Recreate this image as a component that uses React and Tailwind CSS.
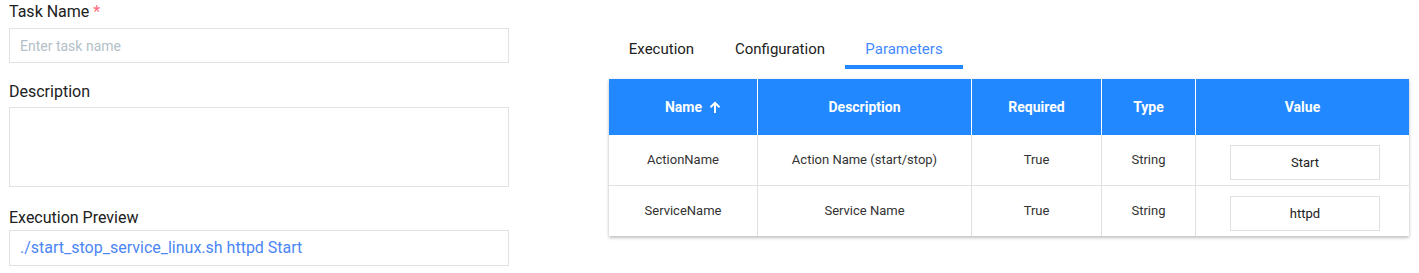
import React, { useState } from "react";

const columns = [
  { key: "name", label: "Name", width: "w-[148px]", sortable: true },
  { key: "description", label: "Description", width: "w-[214px]" },
  { key: "required", label: "Required", width: "w-[130px]" },
  { key: "type", label: "Type", width: "w-[94px]" },
  { key: "value", label: "Value", width: "w-[214px]" },
];

const initialParams = [
  { id: 1, name: "ActionName", description: "Action Name (start/stop)", required: "True", type: "String", value: "Start" },
  { id: 2, name: "ServiceName", description: "Service Name", required: "True", type: "String", value: "httpd" },
];

function SortArrow() {
  return (
    <svg width="12" height="13" viewBox="0 0 12 13" className="ml-[7px]">
      <path d="M6 12V2M1.5 6.3L6 1.8l4.5 4.5" fill="none" stroke="white" strokeWidth="2" />
    </svg>
  );
}

function App() {
  const [taskName, setTaskName] = useState("");
  const [description, setDescription] = useState("");
  const [activeTab, setActiveTab] = useState("Parameters");
  const [params, setParams] = useState(initialParams);

  const tabs = [
    { label: "Execution", width: "w-[107px]" },
    { label: "Configuration", width: "w-[130px]" },
    { label: "Parameters", width: "w-[118px]" },
  ];

  const handleValueChange = (id, value) => {
    setParams((prev) => prev.map((p) => (p.id === id ? { ...p, value } : p)));
  };

  const preview =
    "./start_stop_service_linux.sh " +
    params.find((p) => p.name === "ServiceName").value +
    " " +
    params.find((p) => p.name === "ActionName").value;

  return (
    <div className="flex bg-white font-['Roboto',sans-serif] h-[273px] w-[1419px]">
      {/* left form */}
      <div className="pl-[9px] w-[509px] flex flex-col">
        <label className="text-[16px] leading-6 text-[#212121]">
          Task Name <span className="text-[#ff6b7f]">*</span>
        </label>
        <input
          type="text"
          placeholder="Enter task name"
          value={taskName}
          onChange={(e) => setTaskName(e.target.value)}
          className="mt-[4px] w-[500px] h-[35px] border border-[#e2e2e2] px-[10px] text-[14px] text-[#212121] placeholder:text-[#b3c0c8] outline-none"
        />

        <label className="mt-[17px] text-[16px] leading-6 text-[#212121]">Description</label>
        <textarea
          value={description}
          onChange={(e) => setDescription(e.target.value)}
          className="mt-[3px] w-[500px] h-[80px] border border-[#e2e2e2] px-[10px] py-2 text-[14px] resize-none outline-none"
        />

        <label className="mt-[19px] text-[16px] leading-6 text-[#212121]">Execution Preview</label>
        <div className="w-[500px] h-[36px] border border-[#e2e2e2] px-[10px] flex items-center text-[16px] text-[#4a86f5]">
          {preview}
        </div>
      </div>

      {/* right panel */}
      <div className="ml-[99px] pt-[38px]">
        <div className="flex">
          {tabs.map((tab) => (
            <button
              key={tab.label}
              onClick={() => setActiveTab(tab.label)}
              className={
                tab.width +
                " text-center text-[15px] leading-[22px] pt-0 pb-[5px] border-b-4 " +
                (activeTab === tab.label
                  ? "border-[#2188ff] text-[#448aff]"
                  : "border-transparent text-[#212121]")
              }
            >
              {tab.label}
            </button>
          ))}
        </div>

        <div className="mt-[10px] ml-[1px] w-[800px] bg-white shadow-[0_2px_3px_rgba(0,0,0,0.22),0_0_4px_rgba(0,0,0,0.08)]">
          <div className="flex h-[56px] bg-[#2188ff]">
            {columns.map((col, i) => (
              <div
                key={col.key}
                className={
                  col.width +
                  " flex items-center justify-center text-[14px] font-bold text-white " +
                  (i > 0 ? "border-l border-white" : "") +
                  (col.sortable ? " pl-[20px]" : "")
                }
              >
                {col.label}
                {col.sortable && <SortArrow />}
              </div>
            ))}
          </div>
          {params.map((p, rowIndex) => (
            <div
              key={p.id}
              className={"flex h-[50px] " + (rowIndex > 0 ? "border-t border-[#e0e0e0] h-[51px]" : "")}
            >
              <div className="w-[148px] flex items-center justify-center text-[13px] text-[#333]">{p.name}</div>
              <div className="w-[214px] border-l border-[#e0e0e0] flex items-center justify-center text-[13px] text-[#333]">
                {p.description}
              </div>
              <div className="w-[130px] border-l border-[#e0e0e0] flex items-center justify-center text-[13px] text-[#333]">
                {p.required}
              </div>
              <div className="w-[94px] border-l border-[#e0e0e0] flex items-center justify-center text-[13px] text-[#333]">
                {p.type}
              </div>
              <div className="w-[214px] border-l border-[#e0e0e0] pl-[34px] pt-[10px]">
                <input
                  type="text"
                  value={p.value}
                  onChange={(e) => handleValueChange(p.id, e.target.value)}
                  className="w-[150px] h-[35px] border border-[#e0e0e0] text-center text-[13px] text-[#212121] outline-none"
                />
              </div>
            </div>
          ))}
        </div>
      </div>
    </div>
  );
}

export default App;
